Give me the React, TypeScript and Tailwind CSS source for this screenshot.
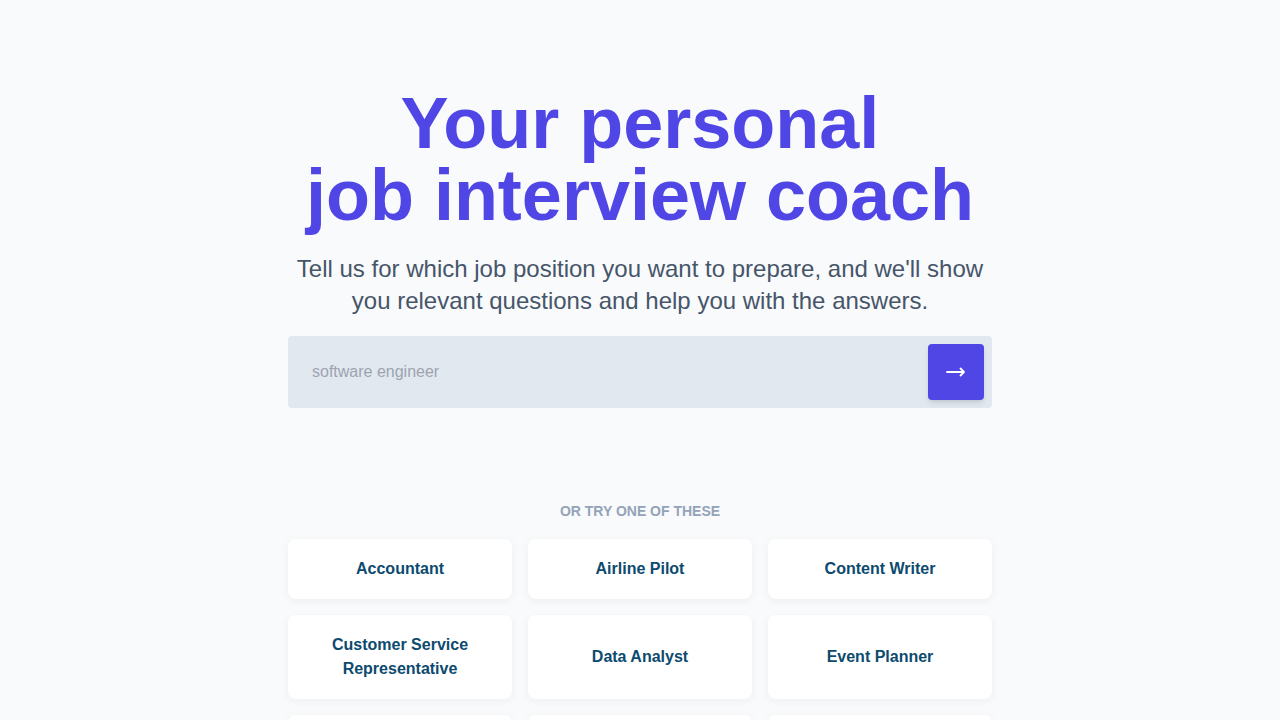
import React from 'react';

const jobs = [
  'Accountant',
  'Airline Pilot',
  'Content Writer',
  'Customer Service Representative',
  'Data Analyst',
  'Event Planner',
  'Financial Advisor',
  'Graphic Designer',
  'Human Resources Manager',
];

const ArrowRight = () => (
  <svg width="20" height="10" viewBox="0 0 20 10" fill="none" stroke="white" strokeWidth="1.8" strokeLinecap="round" strokeLinejoin="round">
    <path d="M1 5h17M14.5 1.5L18 5l-3.5 3.5" />
  </svg>
);

const App = () => {
  return (
    <div className="min-h-screen bg-[#f8fafc] font-['Liberation_Sans',Arial,sans-serif]">
      <div className="mx-auto w-[704px] pt-[87px] pb-16">
        <h1 className="text-center text-[72px] leading-none font-bold text-[#4f46e5]">
          Your personal
          <br />
          job interview coach
        </h1>
        <p className="mt-[22px] text-center text-2xl text-[#475569]">
          Tell us for which job position you want to prepare, and we'll show you relevant questions and help you with the answers.
        </p>
        <div className="mt-[19px] flex h-[72px] items-center rounded bg-[#e2e8f0] p-2">
          <input
            className="h-full flex-1 bg-transparent pb-px pl-4 text-base text-[#334155] outline-none placeholder:text-[#9ca3af]"
            placeholder="software engineer"
          />
          <button className="flex h-14 w-14 items-center justify-center rounded bg-[#4f46e5] shadow-md">
            <ArrowRight />
          </button>
        </div>
        <div className="mt-[93px] text-center text-sm font-bold uppercase text-[#94a3b8]">Or try one of these</div>
        <div className="mt-[18px] grid grid-cols-3 gap-4">
          {jobs.map((job) => (
            <button
              key={job}
              className="flex items-center justify-center rounded-lg bg-white px-6 py-[18px] text-center text-base leading-6 font-bold text-[#0c4a6e] shadow-[0_2px_8px_rgba(15,23,42,0.05)]"
            >
              {job}
            </button>
          ))}
        </div>
      </div>
    </div>
  );
};

export default App;
